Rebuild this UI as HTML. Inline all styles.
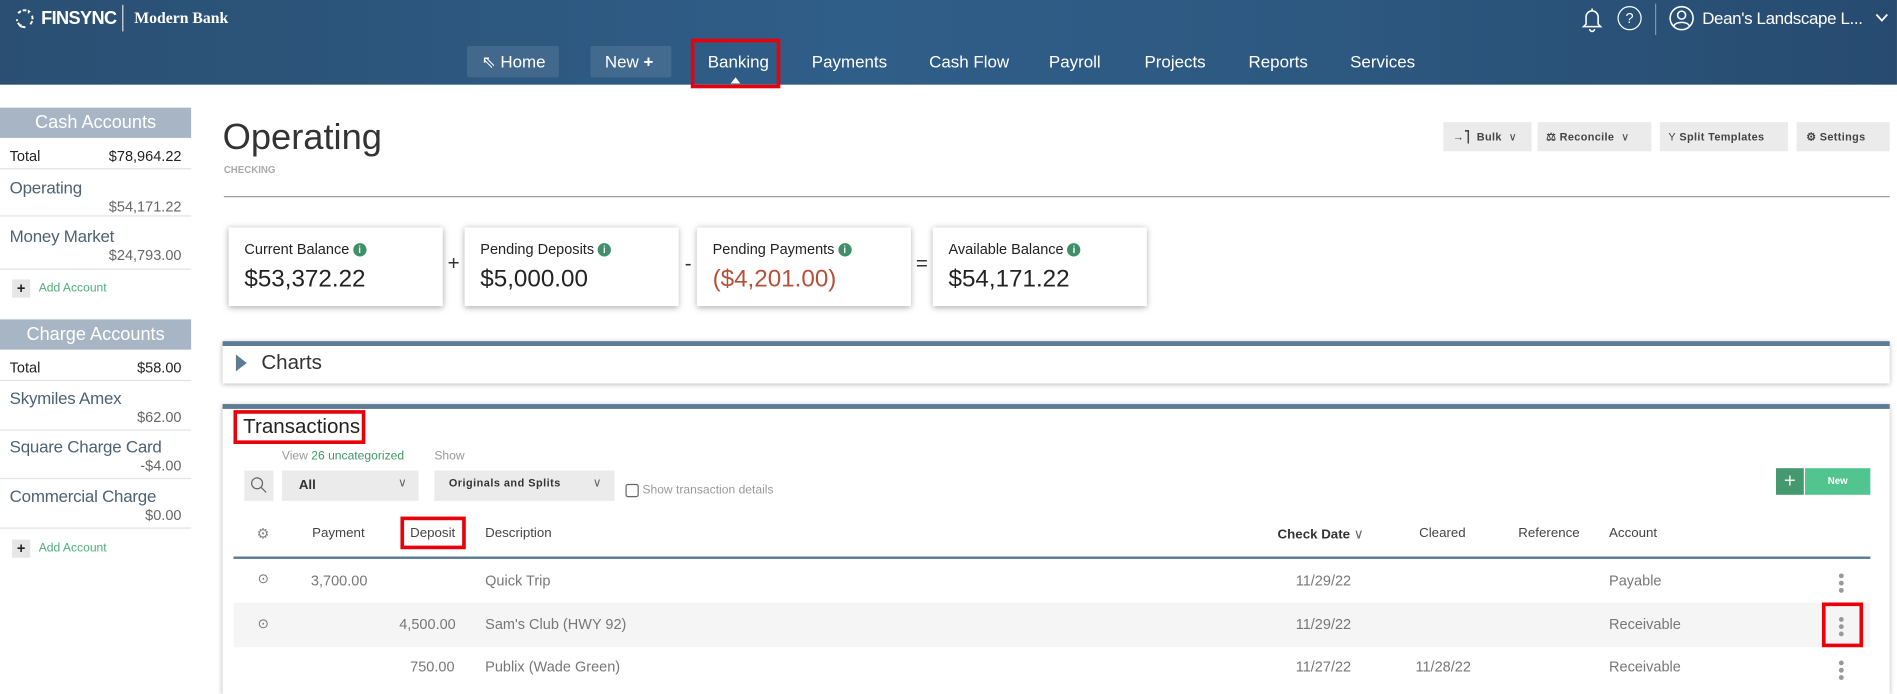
<!DOCTYPE html>
<html><head><meta charset="utf-8"><style>
*{box-sizing:border-box;margin:0;padding:0}
html,body{width:1897px;height:686px;overflow:hidden;background:#fff;font-family:"Liberation Sans",sans-serif}
#s{position:absolute;left:0;top:0;width:1568px;height:567px;transform:scale(1.2098);transform-origin:0 0;background:#fff}
.a{position:absolute;white-space:nowrap}
.hdr{position:absolute;left:0;top:0;width:1568px;height:70px;background:linear-gradient(90deg,#2a4f72 0%,#2f5e89 45%,#2d5880 70%,#274b70 100%)}
.nav{color:#fff;font-size:14px;top:43px}
.nb{position:absolute;top:38px;height:26px;background:rgba(255,255,255,0.1);border-radius:2px}
.side{font-size:14px;color:#4d6274;letter-spacing:-.2px}
.sh{position:absolute;left:0;width:158px;height:25px;background:#a7b5c4;color:#fff;font-size:15px;text-align:center;line-height:25px}
.ln{position:absolute;left:0;width:158px;height:1px;background:#e2e2e2}
.amt{font-size:12px;color:#666;right:1418px;text-align:right}
.btn{position:absolute;top:101px;height:24px;background:#ebebeb;font-size:9px;font-weight:bold;color:#444;line-height:24px;letter-spacing:.3px}
.card{position:absolute;top:188px;width:177px;height:65px;background:#fff;box-shadow:0 1px 5px rgba(0,0,0,.35)}
.card .l{position:absolute;left:13px;top:11px;font-size:12px;color:#222}
.card .v{position:absolute;left:13px;top:32px;font-size:20px;color:#222}
.i{display:inline-block;width:11px;height:11px;border-radius:50%;background:#3f8f68;color:#fff;font-size:8px;text-align:center;line-height:11px;font-weight:bold;vertical-align:1px;margin-left:3px}
.op{position:absolute;top:208px;font-size:17px;color:#333}
.th{top:435px;font-size:11px;color:#444}
.td{font-size:12px;color:#777}
.red{position:absolute;border:3px solid #e8000b}
.dots{position:absolute;left:1520px;width:4px}
.dots i{display:block;width:4px;height:4px;border-radius:50%;background:#999;margin-bottom:2px}
</style></head><body><div id="s">
<div class="hdr"></div>
<svg class="a" style="left:12px;top:7px" width="17" height="17" viewBox="0 0 17 17"><path d="M3 4A7 7 0 0 1 12 2.5M14.5 6A7 7 0 0 1 12 14M9 15.5A7 7 0 0 1 2 9" fill="none" stroke="#fff" stroke-width="1.6" stroke-dasharray="3 1.5"/><path d="M11 1l2.5 1.5L11 4.5z M6 16 3.5 14.5 6 13z" fill="#fff"/></svg>
<div class="a" style="left:34px;top:7px;color:#fff;font-size:15px;font-weight:bold;letter-spacing:-.5px">FINSYNC</div>
<div class="a" style="left:101px;top:4px;width:1px;height:22px;background:#ddd"></div>
<div class="a" style="left:111px;top:7px;color:#fff;font-size:13px;font-family:'Liberation Serif',serif;font-weight:bold">Modern Bank</div>
<div class="nb" style="left:386px;width:76px"></div><div class="nb" style="left:488px;width:67px"></div>
<div class="a nav" style="left:398px">⇖ Home</div>
<div class="a nav" style="left:500px">New <b>+</b></div>
<div class="a nav" style="left:585px">Banking</div>
<div class="a" style="left:604px;top:64px;width:0;height:0;border-left:4px solid transparent;border-right:4px solid transparent;border-bottom:5px solid #fff"></div>
<div class="red" style="left:571px;top:32px;width:74px;height:41px"></div>
<div class="a nav" style="left:671px">Payments</div>
<div class="a nav" style="left:768px">Cash Flow</div>
<div class="a nav" style="left:867px">Payroll</div>
<div class="a nav" style="left:946px">Projects</div>
<div class="a nav" style="left:1032px">Reports</div>
<div class="a nav" style="left:1116px">Services</div>
<svg class="a" style="left:1306px;top:5px" width="20" height="22" viewBox="0 0 20 22"><path d="M10 2v2M5 15V9a5 5 0 0 1 10 0v6l2 2H3z M8 19a2 2 0 0 0 4 0" fill="none" stroke="#fff" stroke-width="1.3"/></svg>
<div class="a" style="left:1337px;top:5px;width:20px;height:20px;border:1.3px solid #fff;border-radius:50%;color:#fff;font-size:12px;text-align:center;line-height:18px">?</div>
<div class="a" style="left:1368px;top:3px;width:1px;height:26px;background:rgba(255,255,255,.4)"></div>
<svg class="a" style="left:1379px;top:4px" width="22" height="22" viewBox="0 0 22 22"><circle cx="11" cy="11" r="9.5" fill="none" stroke="#fff" stroke-width="1.3"/><circle cx="11" cy="8.5" r="3.3" fill="none" stroke="#fff" stroke-width="1.3"/><path d="M4.5 17.5c2-4 11-4 13 0" fill="none" stroke="#fff" stroke-width="1.3"/></svg>
<div class="a" style="left:1407px;top:7px;color:#fff;font-size:14px;letter-spacing:-.3px">Dean's Landscape L...</div>
<svg class="a" style="left:1550px;top:11px" width="11" height="8" viewBox="0 0 11 8"><path d="M1 1l4.5 5L10 1" fill="none" stroke="#fff" stroke-width="1.5"/></svg>

<div class="sh" style="top:89px">Cash Accounts</div>
<div class="a" style="left:8px;top:122px;font-size:12px;color:#222">Total</div>
<div class="a" style="right:1418px;top:122px;font-size:12px;color:#222">$78,964.22</div>
<div class="ln" style="top:139px"></div>
<div class="a side" style="left:8px;top:147px">Operating</div>
<div class="a amt" style="top:164px">$54,171.22</div>
<div class="ln" style="top:178px"></div>
<div class="a side" style="left:8px;top:187px">Money Market</div>
<div class="a amt" style="top:204px">$24,793.00</div>
<div class="ln" style="top:222px"></div>
<div class="a" style="left:10px;top:231px;width:15px;height:15px;background:#e6e6e6;font-size:12px;font-weight:bold;text-align:center;line-height:15px;color:#222">+</div>
<div class="a" style="left:32px;top:233px;font-size:10px;color:#4caf7a">Add Account</div>
<div class="sh" style="top:264px">Charge Accounts</div>
<div class="a" style="left:8px;top:297px;font-size:12px;color:#222">Total</div>
<div class="a" style="right:1418px;top:297px;font-size:12px;color:#222">$58.00</div>
<div class="ln" style="top:314px"></div>
<div class="a side" style="left:8px;top:321px">Skymiles Amex</div>
<div class="a amt" style="top:338px">$62.00</div>
<div class="ln" style="top:355px"></div>
<div class="a side" style="left:8px;top:361px">Square Charge Card</div>
<div class="a amt" style="top:378px">-$4.00</div>
<div class="ln" style="top:395px"></div>
<div class="a side" style="left:8px;top:402px">Commercial Charge</div>
<div class="a amt" style="top:419px">$0.00</div>
<div class="ln" style="top:436px"></div>
<div class="a" style="left:10px;top:446px;width:15px;height:15px;background:#e6e6e6;font-size:12px;font-weight:bold;text-align:center;line-height:15px;color:#222">+</div>
<div class="a" style="left:32px;top:448px;font-size:10px;color:#4caf7a">Add Account</div>

<div class="a" style="left:184px;top:97px;font-size:30px;color:#333">Operating</div>
<div class="a" style="left:185px;top:136px;font-size:8px;font-weight:bold;color:#aaa">CHECKING</div>
<div class="btn" style="left:1193px;width:73px;padding-left:8px">→⎤ &nbsp;Bulk &nbsp;<span style="font-weight:normal">∨</span></div>
<div class="btn" style="left:1271px;width:94px;padding-left:7px">⚖ Reconcile &nbsp;<span style="font-weight:normal">∨</span></div>
<div class="btn" style="left:1372px;width:106px;padding-left:7px"><span style="font-weight:normal">Y</span> Split Templates</div>
<div class="btn" style="left:1485px;width:77px;padding-left:8px">⚙ Settings</div>
<div class="a" style="left:185px;top:162px;width:1377px;height:1px;background:#999"></div>

<div class="card" style="left:189px"><div class="l">Current Balance<span class="i">i</span></div><div class="v">$53,372.22</div></div>
<div class="op" style="left:370px">+</div>
<div class="card" style="left:384px"><div class="l">Pending Deposits<span class="i">i</span></div><div class="v">$5,000.00</div></div>
<div class="op" style="left:566px">-</div>
<div class="card" style="left:576px"><div class="l">Pending Payments<span class="i">i</span></div><div class="v" style="color:#b5503b">($4,201.00)</div></div>
<div class="op" style="left:757px">=</div>
<div class="card" style="left:771px"><div class="l">Available Balance<span class="i">i</span></div><div class="v">$54,171.22</div></div>

<div class="a" style="left:184px;top:282px;width:1378px;height:35px;border-top:4px solid #5d7b93;background:#fff;box-shadow:0 1px 4px rgba(0,0,0,.3)"></div>
<div class="a" style="left:195px;top:293px;width:0;height:0;border-top:7px solid transparent;border-bottom:7px solid transparent;border-left:9px solid #5d7b93"></div>
<div class="a" style="left:216px;top:290px;font-size:17px;color:#333">Charts</div>

<div class="a" style="left:184px;top:334px;width:1378px;height:240px;border-top:4px solid #5d7b93;background:#fff;box-shadow:0 1px 4px rgba(0,0,0,.3)"></div>
<div class="a" style="left:201px;top:343px;font-size:17px;color:#222">Transactions</div>
<div class="red" style="left:193px;top:339px;width:109px;height:28px"></div>
<div class="a" style="left:233px;top:372px;font-size:10px;color:#999">View <span style="color:#3f9966">26 uncategorized</span></div>
<div class="a" style="left:359px;top:372px;font-size:10px;color:#999">Show</div>
<div class="a" style="left:202px;top:389px;width:24px;height:25px;background:#ebebeb"></div>
<svg class="a" style="left:206px;top:393px" width="16" height="16" viewBox="0 0 16 16"><circle cx="6.5" cy="6.5" r="4.5" fill="none" stroke="#666" stroke-width="1"/><path d="M10 10l4 4" stroke="#666"/></svg>
<div class="a" style="left:233px;top:389px;width:113px;height:25px;background:#ebebeb"></div>
<div class="a" style="left:247px;top:395px;font-size:11px;font-weight:bold;color:#333">All</div>
<div class="a" style="left:329px;top:394px;font-size:10px;color:#666">∨</div>
<div class="a" style="left:359px;top:389px;width:149px;height:25px;background:#ebebeb"></div>
<div class="a" style="left:371px;top:394px;font-size:9px;font-weight:bold;color:#333;letter-spacing:.4px">Originals and Splits</div>
<div class="a" style="left:490px;top:394px;font-size:10px;color:#666">∨</div>
<div class="a" style="left:517px;top:400px;width:11px;height:11px;border:1px solid #666;border-radius:2px"></div>
<div class="a" style="left:531px;top:400px;font-size:10px;color:#999">Show transaction details</div>
<div class="a" style="left:1468px;top:387px;width:23px;height:22px;background:#45996e;color:#eee;font-size:17px;text-align:center;line-height:21px">+</div>
<div class="a" style="left:1492px;top:387px;width:54px;height:22px;background:#52c48f;color:#fff;font-size:8px;font-weight:bold;text-align:center;line-height:22px">New</div>

<div class="a th" style="left:212px;top:434px;color:#888;font-size:12px">⚙</div>
<div class="a th" style="left:258px">Payment</div>
<div class="a th" style="left:339px">Deposit</div>
<div class="red" style="left:331px;top:427px;width:54px;height:27px"></div>
<div class="a th" style="left:401px">Description</div>
<div class="a th" style="left:1056px;font-weight:bold;color:#333">Check Date <span style="font-weight:normal;color:#666">∨</span></div>
<div class="a th" style="left:1173px">Cleared</div>
<div class="a th" style="left:1255px">Reference</div>
<div class="a th" style="left:1330px">Account</div>
<div class="a" style="left:193px;top:460px;width:1353px;height:2px;background:#5d7b93"></div>

<div class="a" style="left:193px;top:498px;width:1353px;height:37px;background:#f5f5f5"></div>
<div class="a td" style="left:213px;top:472px;font-size:11px">⊙</div>
<div class="a td" style="left:257px;top:473px">3,700.00</div>
<div class="a td" style="left:401px;top:473px">Quick Trip</div>
<div class="a td" style="left:1071px;top:473px">11/29/22</div>
<div class="a td" style="left:1330px;top:473px">Payable</div>
<div class="dots" style="top:474px"><i></i><i></i><i></i></div>
<div class="a td" style="left:213px;top:509px;font-size:11px">⊙</div>
<div class="a td" style="left:330px;top:509px">4,500.00</div>
<div class="a td" style="left:401px;top:509px">Sam's Club (HWY 92)</div>
<div class="a td" style="left:1071px;top:509px">11/29/22</div>
<div class="a td" style="left:1330px;top:509px">Receivable</div>
<div class="dots" style="top:510px"><i></i><i></i><i></i></div>
<div class="red" style="left:1506px;top:498px;width:34px;height:37px"></div>
<div class="a td" style="left:339px;top:544px">750.00</div>
<div class="a td" style="left:401px;top:544px">Publix (Wade Green)</div>
<div class="a td" style="left:1071px;top:544px">11/27/22</div>
<div class="a td" style="left:1170px;top:544px">11/28/22</div>
<div class="a td" style="left:1330px;top:544px">Receivable</div>
<div class="dots" style="top:546px"><i></i><i></i><i></i></div>
</div></body></html>
